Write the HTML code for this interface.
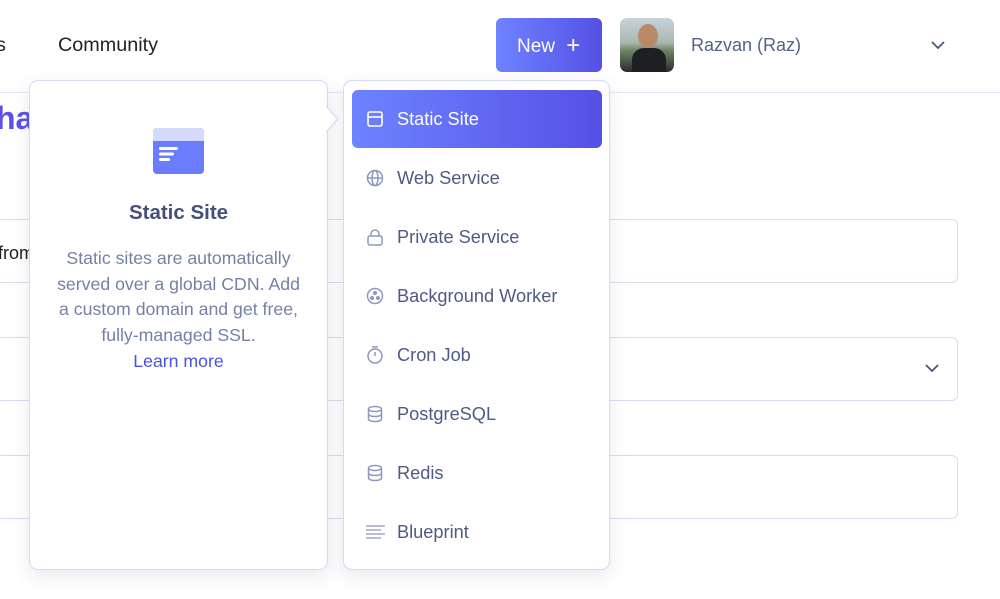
<!DOCTYPE html>
<html><head><meta charset="utf-8"><style>
*{box-sizing:border-box;margin:0;padding:0}
body{width:1000px;height:599px;overflow:hidden;background:#fff;font-family:"Liberation Sans",sans-serif;position:relative;color:#4a5578}
.abs{position:absolute}
.hline{position:absolute;left:0;right:0;top:92px;height:1px;background:#e3e7f3}
.inp{position:absolute;left:-10px;width:968px;height:64px;border:1px solid #d9ddee;border-radius:6px;background:#fff}
.nav{position:absolute;top:34px;font-size:19.8px;color:#222}
.new{position:absolute;left:496px;top:18px;width:106px;height:54px;border-radius:6px;background:linear-gradient(90deg,#6d83ff,#5650e6);color:#fff;font-size:19px;line-height:54px;padding-left:21px}
.pop{position:absolute;top:80px;height:490px;background:#fff;border:1px solid #d4dbf0;border-radius:9px;box-shadow:0 6px 18px rgba(60,70,120,.12)}
.item{position:absolute;left:8px;width:250px;height:58px;border-radius:6px;font-size:18.2px;line-height:58px;padding-left:45px;color:#4f5a85}
.item svg{position:absolute;left:14px;top:20px}
.sel{background:linear-gradient(90deg,#6d83ff,#5650e6);color:#fff}
</style></head><body>
<div class="hline"></div>
<div class="abs" style="left:-4px;top:100px;font-size:32px;font-weight:bold;color:#5b52e8">ha</div>
<div class="inp" style="top:219px"></div>
<div class="abs" style="left:-2px;top:243px;font-size:18px;color:#222">from</div>
<div class="inp" style="top:337px"></div>
<svg class="abs" style="left:924px;top:362px" width="16" height="12" viewBox="0 0 16 12"><path d="M2 3l6 6 6-6" fill="none" stroke="#4a5578" stroke-width="1.8"/></svg>
<div class="inp" style="top:455px"></div>
<div class="nav" style="left:-4px">s</div>
<div class="nav" style="left:58px">Community</div>
<div class="new">New <span style="font-size:24px;margin-left:6px;position:relative;top:1px">+</span></div>
<div class="abs" style="left:620px;top:18px;width:54px;height:54px;border-radius:7px;overflow:hidden;background:linear-gradient(180deg,#c8d2da 0%,#a9b9b0 45%,#6f8465 60%,#2a2b2c 100%)">
<div class="abs" style="left:18px;top:6px;width:20px;height:24px;border-radius:50%;background:#b88a6a"></div>
<div class="abs" style="left:12px;top:30px;width:34px;height:30px;border-radius:12px 12px 0 0;background:#1e1f22"></div>
</div>
<div class="abs" style="left:691px;top:35px;font-size:18px;color:#56618a">Razvan (Raz)</div>
<svg class="abs" style="left:930px;top:39px" width="16" height="12" viewBox="0 0 16 12"><path d="M2 3l6 6 6-6" fill="none" stroke="#4a5578" stroke-width="1.8"/></svg>

<div class="pop" style="left:29px;width:299px">
<svg class="abs" style="left:123px;top:47px" width="51" height="46" viewBox="0 0 51 46"><rect x="0" y="0" width="51" height="46" rx="4" fill="#6b7cff"/><path d="M4 0h43a4 4 0 0 1 4 4v9H0V4a4 4 0 0 1 4-4z" fill="#d5daff"/><rect x="6" y="19" width="19" height="3" rx="1.5" fill="#fff"/><rect x="6" y="24.5" width="15" height="3" rx="1.5" fill="#fff"/><rect x="6" y="30" width="11" height="3" rx="1.5" fill="#fff"/></svg>
<div class="abs" style="left:0;width:297px;top:120px;text-align:center;font-size:20.5px;font-weight:bold;color:#46507a">Static Site</div>
<div class="abs" style="left:0;width:297px;top:165px;text-align:center;font-size:17.7px;line-height:25.7px;color:#7580a8">Static sites are automatically<br>served over a global CDN. Add<br>a custom domain and get free,<br>fully-managed SSL.<br><span style="color:#4a52e6">Learn more</span></div>
</div>
<svg class="abs" style="left:326px;top:106px" width="14" height="26" viewBox="0 0 14 26"><path d="M0 0L12 13L0 26Z" fill="#fff"/><path d="M0 0L12 13L0 26" fill="none" stroke="#d4dbf0" stroke-width="1"/></svg>

<div class="pop" style="left:343px;width:267px">
<div class="item sel" style="top:9px"><svg width="18" height="18" viewBox="0 0 18 18" fill="none" stroke="#fff" stroke-width="1.6"><rect x="2" y="2" width="14" height="14" rx="2"/><path d="M2 7h14"/></svg>Static Site</div>
<div class="item" style="top:68px"><svg width="18" height="18" viewBox="0 0 18 18" fill="none" stroke="#8e98bd" stroke-width="1.5"><circle cx="9" cy="9" r="7.5"/><ellipse cx="9" cy="9" rx="3" ry="7.5"/><path d="M1.5 9h15"/></svg>Web Service</div>
<div class="item" style="top:127px"><svg width="18" height="18" viewBox="0 0 18 18" fill="none" stroke="#8e98bd" stroke-width="1.5"><rect x="2" y="8" width="14" height="9" rx="2"/><path d="M5 8V6a4 4 0 0 1 8 0v2"/></svg>Private Service</div>
<div class="item" style="top:186px"><svg width="18" height="18" viewBox="0 0 18 18" fill="none" stroke="#8e98bd" stroke-width="1.5"><circle cx="9" cy="9" r="7.5"/><circle cx="9" cy="6" r="1.3" fill="#8e98bd"/><circle cx="6" cy="11" r="1.3" fill="#8e98bd"/><circle cx="12" cy="11" r="1.3" fill="#8e98bd"/></svg>Background Worker</div>
<div class="item" style="top:245px"><svg width="18" height="18" viewBox="0 0 18 18" fill="none" stroke="#8e98bd" stroke-width="1.5"><circle cx="9" cy="10" r="7"/><path d="M6 1h6M9 10V6"/></svg>Cron Job</div>
<div class="item" style="top:304px"><svg width="18" height="18" viewBox="0 0 18 18" fill="none" stroke="#8e98bd" stroke-width="1.5"><ellipse cx="9" cy="4" rx="6.5" ry="2.5"/><path d="M2.5 4v10c0 1.4 2.9 2.5 6.5 2.5s6.5-1.1 6.5-2.5V4M2.5 9c0 1.4 2.9 2.5 6.5 2.5s6.5-1.1 6.5-2.5"/></svg>PostgreSQL</div>
<div class="item" style="top:363px"><svg width="18" height="18" viewBox="0 0 18 18" fill="none" stroke="#8e98bd" stroke-width="1.5"><ellipse cx="9" cy="4" rx="6.5" ry="2.5"/><path d="M2.5 4v10c0 1.4 2.9 2.5 6.5 2.5s6.5-1.1 6.5-2.5V4M2.5 9c0 1.4 2.9 2.5 6.5 2.5s6.5-1.1 6.5-2.5"/></svg>Redis</div>
<div class="item" style="top:422px"><svg width="20" height="18" viewBox="0 0 20 18" fill="none" stroke="#8e98bd" stroke-width="1.3"><path d="M0 3h19M0 7h15M0 11h19M0 15h15"/></svg>Blueprint</div>
</div>
</body></html>
